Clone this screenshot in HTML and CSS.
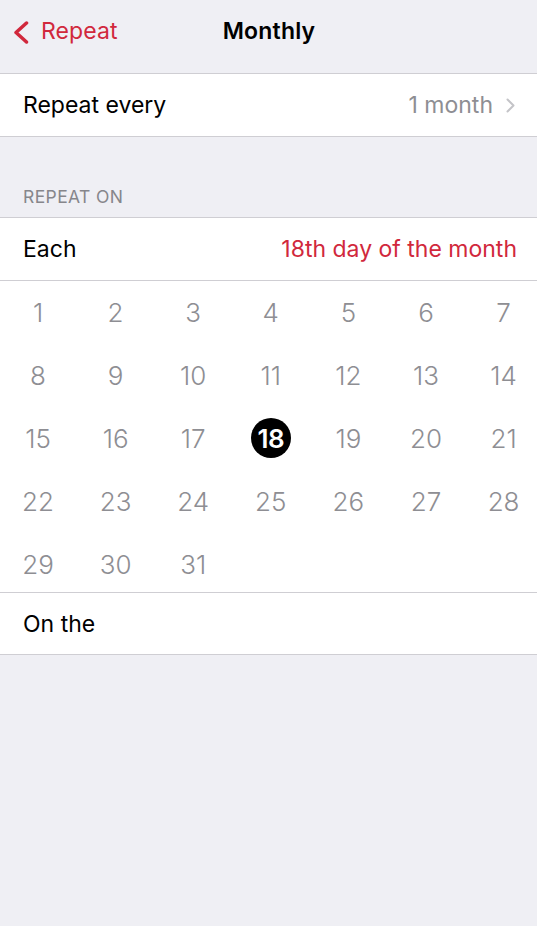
FILE: index.html
```html
<!DOCTYPE html>
<html lang="en">
<head>
<meta charset="utf-8">
<title>Monthly</title>
<link rel="stylesheet" href="styles.css">
</head>
<body>
  <header class="nav">
    <a class="nav-back" href="#">
      <svg class="nav-chevron" viewBox="0 0 16 23" width="16" height="23" aria-hidden="true">
        <path d="M13.5 2 L3 11.5 L13.5 21" fill="none" stroke="currentColor" stroke-width="3.5" stroke-linecap="round" stroke-linejoin="round"/>
      </svg>
      <span>Repeat</span>
    </a>
    <h1 class="nav-title">Monthly</h1>
  </header>

  <section class="group group-first">
    <div class="cell">
      <span class="cell-label">Repeat every</span>
      <span class="cell-detail">1 month
        <svg class="disclosure" viewBox="0 0 9 15" width="9" height="15" aria-hidden="true">
          <path d="M1.5 1.5 L7.5 7.5 L1.5 13.5" fill="none" stroke="currentColor" stroke-width="2" stroke-linecap="round" stroke-linejoin="round"/>
        </svg>
      </span>
    </div>
  </section>

  <h2 class="group-header">REPEAT ON</h2>
  <section class="group">
    <div class="cell cell-divided">
      <span class="cell-label">Each</span>
      <span class="cell-value">18th day of the month</span>
    </div>
    <div class="days" id="days"></div>
    <div class="cell cell-topline">
      <span class="cell-label">On the</span>
    </div>
  </section>

  <script src="app.js"></script>
</body>
</html>
```

FILE: app.js
```js
// Fill the month-day picker with 1..31 and mark the chosen day.
const selected = 18;
const grid = document.getElementById('days');
for (let d = 1; d <= 31; d++) {
  const el = document.createElement('span');
  el.className = d === selected ? 'day day-selected' : 'day';
  el.textContent = d;
  grid.appendChild(el);
}
```

FILE: styles.css
```css
* { box-sizing: border-box; }

html, body {
  margin: 0;
  padding: 0;
  background: #efeff4;
  font-family: "Inter", "Roboto", "Liberation Sans", sans-serif;
  color: #000;
  -webkit-font-smoothing: antialiased;
}

body {
  min-height: 926px;
}

/* Navigation bar */
.nav {
  height: 74px;
  display: grid;
  grid-template-columns: 1fr auto 1fr;
  align-items: center;
  padding: 0 12px 0 13px;
  border-bottom: 1px solid #cfced3;
}

.nav-back {
  display: flex;
  align-items: center;
  gap: 12px;
  color: #d1283c;
  text-decoration: none;
  font-size: 23px;
  letter-spacing: 0.1px;
  margin-top: -12px;
}

.nav-chevron {
  display: block;
  margin-top: 4px;
}

.nav-title {
  margin: -12px 0 0 0;
  font-size: 23px;
  font-weight: 600;
  letter-spacing: 0.2px;
}

/* Grouped table sections */
.group {
  background: #fff;
  border-bottom: 1px solid #cfced3;
}

.group-first {
  margin-bottom: 44px;
}

.group-header {
  margin: 0;
  padding: 0 23px 10px;
  height: 37px;
  display: flex;
  align-items: flex-end;
  font-size: 17.5px;
  font-weight: 400;
  color: #86868b;
  letter-spacing: 0.4px;
  border-bottom: 1px solid #cfced3;
}

.cell {
  height: 62px;
  display: flex;
  align-items: center;
  justify-content: space-between;
  padding: 0 20px 0 23px;
  font-size: 23px;
  letter-spacing: 0;
}

.cell-divided {
  height: 63px;
  border-bottom: 1px solid #cfced3;
}

.cell-topline { border-top: 1px solid #cfced3; }

.cell-detail {
  display: flex;
  align-items: center;
  gap: 13px;
  color: #8e8e93;
  margin-right: 2px;
}

.disclosure {
  display: block;
  color: #c4c4c8;
}

.cell-value {
  color: #d1283c;
}

/* Day-of-month picker */
.days {
  display: grid;
  grid-template-columns: repeat(7, 60px);
  grid-auto-rows: 56px;
  column-gap: 17.6px;
  row-gap: 7px;
  padding: 3px 0 0 8px;
}

.day {
  display: flex;
  align-items: center;
  justify-content: center;
  font-size: 26px;
  font-weight: 300;
  color: #8e8e93;
}

.day-selected {
  justify-self: center;
  align-self: center;
  width: 40px;
  height: 40px;
  border-radius: 50%;
  background: #000;
  color: #fff;
  font-weight: 600;
  letter-spacing: -0.5px;
}
```
